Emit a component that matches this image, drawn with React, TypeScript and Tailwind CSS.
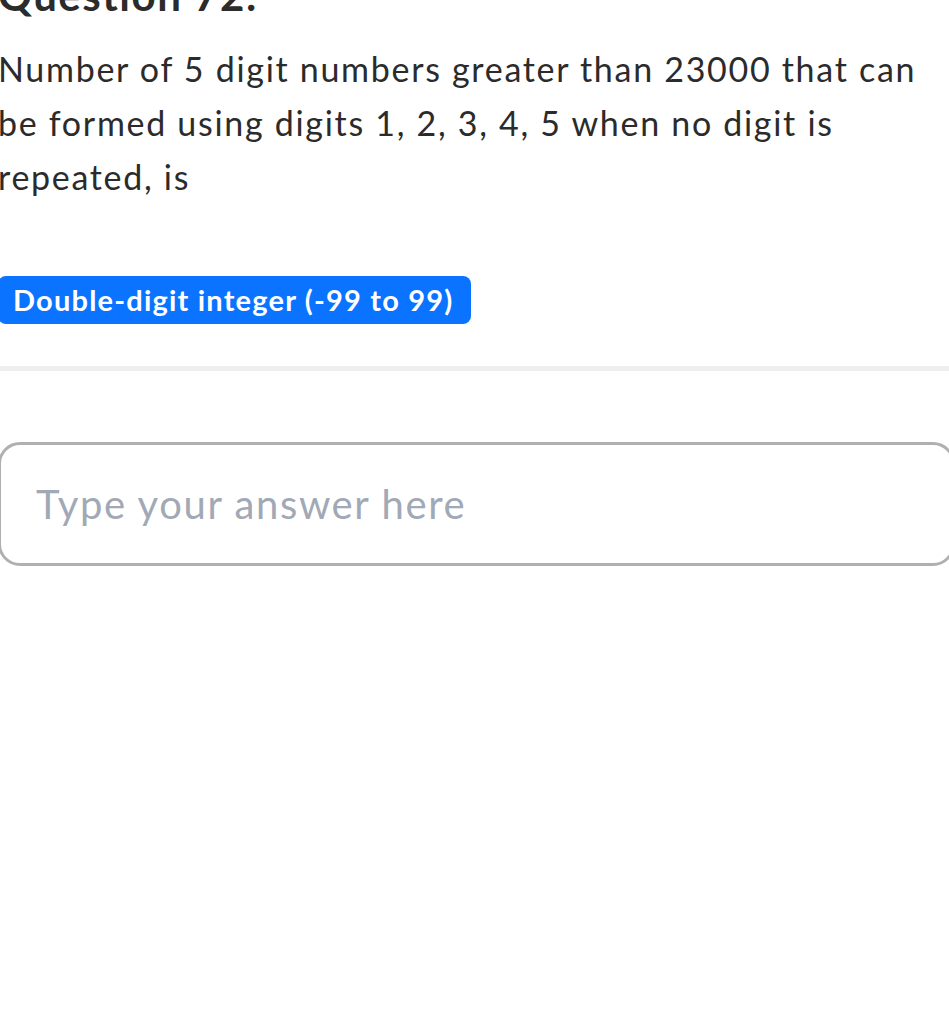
export default function App() {
  return (
    <div className="min-h-screen bg-white overflow-hidden" style={{ fontFamily: '"Lato", "Noto Sans", sans-serif' }}>
      <div className="w-[957px] -ml-[2px] flex flex-col">
        <h2 className="-mt-[29px] text-[42px] leading-[48px] font-bold tracking-[1.5px] text-[#2b2b2b]">Question 72:</h2>
        <p className="mt-[23px] text-[34px] leading-[54px] tracking-[1.7px] text-[#2b2b2b] whitespace-nowrap">
          Number of 5 digit numbers greater than 23000 that can
          <br />
          be formed using digits 1, 2, 3, 4, 5 when no digit is
          <br />
          repeated, is
        </p>
        <div className="mt-[72px]">
          <span className="inline-flex items-center h-[48px] pl-[15px] pr-[17px] rounded-[8px] bg-[#0a73ff] text-white text-[29px] font-bold tracking-[1.2px]">
            Double-digit integer (-99 to 99)
          </span>
        </div>
        <div className="mt-[42px] h-[5px] bg-[#eeeeee]" />
        <div className="mt-[71px] h-[124px] rounded-[22px] border-[3px] border-[#b0b0b0] flex items-center pl-[35px]">
          <input
            className="w-full outline-none bg-transparent text-[40px] tracking-[1.6px] text-[#2b2b2b] placeholder:text-[#a1a8b6]"
            placeholder="Type your answer here"
          />
        </div>
      </div>
    </div>
  );
}
